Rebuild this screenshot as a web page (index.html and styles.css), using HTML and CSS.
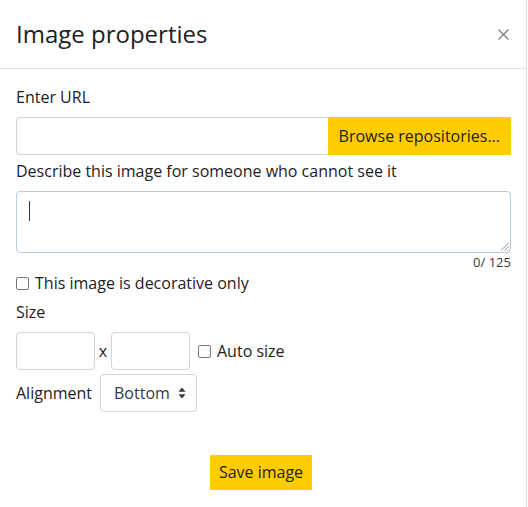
FILE: index.html
```html
<!DOCTYPE html>
<html>
<head>
<meta charset="utf-8">
<link rel="stylesheet" href="styles.css">
</head>
<body>
<div class="modal">
  <div class="modal-header">
    <h5 class="modal-title">Image properties</h5>
    <span class="close" aria-label="Close">
      <svg width="11" height="11" viewBox="0 0 11 11"><path d="M0.5 0.5L10.5 10.5M10.5 0.5L0.5 10.5" stroke="#7a7a7a" stroke-width="1.3" fill="none"/></svg>
    </span>
  </div>
  <div class="modal-body">
    <label class="lbl">Enter URL</label>
    <div class="input-group">
      <div class="form-control url"></div>
      <div class="btn btn-yellow">Browse repositories...</div>
    </div>
    <label class="lbl lbl-desc">Describe this image for someone who cannot see it</label>
    <div class="form-control textarea">
      <span class="caret"></span>
      <svg class="grip" width="9" height="9" viewBox="0 0 9 9"><path d="M8.5 1L1 8.5M8.5 4.5L4.5 8.5M8.5 7.5L7.5 8.5" stroke="#888" stroke-width="1" fill="none"/></svg>
    </div>
    <div class="counter">0/ 125</div>
    <div class="check-row">
      <span class="checkbox"></span>
      <span class="check-label">This image is decorative only</span>
    </div>
    <label class="lbl lbl-size">Size</label>
    <div class="size-row">
      <div class="form-control small"></div>
      <span class="times">x</span>
      <div class="form-control small"></div>
      <span class="checkbox auto"></span>
      <span class="check-label">Auto size</span>
    </div>
    <div class="align-row">
      <span class="align-label">Alignment</span>
      <div class="select">
        <span>Bottom</span>
        <svg width="8" height="12" viewBox="0 0 8 12"><path d="M4 0.5L7.5 4.8H0.5Z M4 11.5L7.5 7.2H0.5Z" fill="#343a40"/></svg>
      </div>
    </div>
    <div class="footer">
      <div class="btn btn-yellow save">Save image</div>
    </div>
  </div>
</div>
</body>
</html>
```

FILE: styles.css
```css
* { box-sizing: border-box; }
html, body { margin: 0; padding: 0; background: #fff; }
body {
  font-family: "Open Sans", "Liberation Sans", sans-serif;
  font-size: 16px;
  line-height: 24px;
  color: #1d2125;
}
.modal {
  width: 527px;
  height: 507px;
  border-right: 1px solid #dcdcdc;
  background: #fff;
}
.modal-header {
  height: 69px;
  border-bottom: 1px solid #dee2e6;
  display: flex;
  align-items: center;
  justify-content: space-between;
  padding: 0 16px 0 16px;
}
.modal-title {
  margin: 0;
  font-size: 24px;
  line-height: 36px;
  font-weight: 400;
  color: #1d2125;
}
.close {
  display: flex;
  margin-right: 1px;
}
.modal-body {
  padding: 16px 15px 0 16px;
}
.lbl {
  display: block;
  margin-bottom: 8px;
}
.input-group {
  display: flex;
  height: 38px;
}
.form-control {
  border: 1px solid #ced4da;
  border-radius: 4px;
  background: #fff;
}
.url {
  flex: 1;
  border-radius: 4px 0 0 4px;
  border-right: 0;
}
.btn {
  padding: 7px 11px;
  line-height: 24px;
  white-space: nowrap;
}
.btn-yellow {
  background: #ffcc00;
  color: #1d2125;
}
.lbl-desc {
  margin-top: 4px;
}
.textarea {
  height: 62px;
  position: relative;
  border-color: #b8c8e0;
}
.caret {
  position: absolute;
  left: 12px;
  top: 9px;
  width: 1px;
  height: 20px;
  background: #333;
}
.grip {
  position: absolute;
  right: 1px;
  bottom: 1px;
}
.counter {
  text-align: right;
  font-size: 13px;
  line-height: 18px;
  color: #343a40;
}
.check-row {
  display: flex;
  align-items: center;
  height: 24px;
}
.checkbox {
  width: 13px;
  height: 13px;
  border: 1px solid #767676;
  border-radius: 2px;
  margin-right: 6px;
  flex: none;
}
.lbl-size {
  margin-top: 5px;
}
.size-row {
  display: flex;
  align-items: center;
  height: 38px;
}
.small {
  width: 79px;
  height: 38px;
}
.times {
  width: 16px;
  text-align: center;
}
.auto {
  margin-left: 8px;
}
.align-row {
  display: flex;
  align-items: center;
  margin-top: 4px;
}
.align-label {
  margin-right: 8px;
}
.select {
  display: flex;
  align-items: center;
  height: 38px;
  padding: 0 10px 0 13px;
  border: 1px solid #ced4da;
  border-radius: 4px;
  gap: 8px;
  color: #343a40;
}
.footer {
  display: flex;
  justify-content: center;
  margin-top: 43px;
  padding-right: 5px;
}
.save {
  padding: 5px 9px 6px;
}
```
